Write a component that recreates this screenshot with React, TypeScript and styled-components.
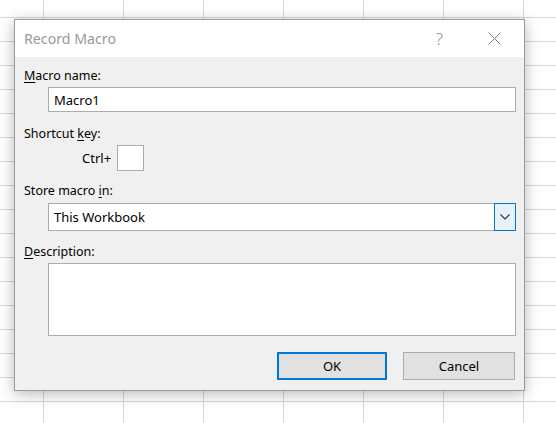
import React from 'react';
import styled, { createGlobalStyle } from 'styled-components';

const GlobalStyle = createGlobalStyle`
  html, body {
    margin: 0;
    padding: 0;
    width: 556px;
    height: 423px;
    overflow: hidden;
    background-color: #ffffff;
    background-image:
      linear-gradient(to right, #d6d6d6 1px, transparent 1px),
      linear-gradient(to bottom, #d6d6d6 1px, transparent 1px);
    background-size: 80px 24px;
    background-position: 43px 17px;
  }
`;

const Sheet = styled.div`
  padding: 19px 0 0 14px;
  font-family: 'Segoe UI', 'Noto Sans', 'Open Sans', sans-serif;
`;

const Dialog = styled.div`
  box-sizing: border-box;
  width: 511px;
  height: 372px;
  border: 1px solid #9a9a9a;
  background: #f0f0f0;
  box-shadow: 0 3px 14px rgba(0, 0, 0, 0.28);
  display: flex;
  flex-direction: column;
`;

const TitleBar = styled.div`
  height: 37px;
  background: #ffffff;
  display: flex;
  align-items: center;
  padding: 0 23px 0 9px;
`;

const Title = styled.span`
  flex: 1;
  font-size: 14.2px;
  color: #9a9a9a;
  padding-bottom: 1px;
`;

const Help = styled.span`
  font-size: 17px;
  color: #8a8a8a;
  margin-right: 45px;
  font-weight: 300;
`;

const Body = styled.div`
  flex: 1;
  padding: 11px 8px 10px 9px;
  display: flex;
  flex-direction: column;
  font-size: 12.5px;
  color: #000;
`;

const Label = styled.div<{ $gap?: number }>`
  line-height: 16px;
  height: 16px;
  margin-bottom: ${(p) => p.$gap ?? 3}px;
  u { text-decoration-thickness: 1px; text-underline-offset: 2px; }
`;

const Field = styled.div<{ $h: number; $after: number }>`
  box-sizing: border-box;
  margin-left: 24px;
  height: ${(p) => p.$h}px;
  margin-bottom: ${(p) => p.$after}px;
  background: #fff;
  border: 1px solid #acacac;
  display: flex;
  align-items: center;
  padding-left: 5px;
  font-size: 13px;
`;

const FieldText = styled.span`
  flex: 1;
`;

const DropButton = styled.div`
  box-sizing: border-box;
  width: 22px;
  height: 28px;
  margin: -1px -1px -1px 0;
  border: 1px solid #0078d7;
  background: #e5f1fb;
  display: flex;
  align-items: center;
  justify-content: center;
`;

const ShortcutRow = styled.div`
  display: flex;
  align-items: center;
  margin-left: 58px;
  margin-bottom: 12px;
  gap: 6px;
  font-size: 13px;
`;

const KeyBox = styled.div`
  box-sizing: border-box;
  width: 27px;
  height: 26px;
  background: #fff;
  border: 1px solid #acacac;
`;

const ButtonRow = styled.div`
  display: flex;
  justify-content: flex-end;
  gap: 16px;
  padding-right: 1px;
`;

const Button = styled.div<{ $primary?: boolean }>`
  box-sizing: border-box;
  width: ${(p) => (p.$primary ? 110 : 112)}px;
  height: 28px;
  background: #e1e1e1;
  border: ${(p) => (p.$primary ? '2px solid #0078d7' : '1px solid #adadad')};
  display: flex;
  align-items: center;
  justify-content: center;
  font-size: 13px;
`;

const CloseIcon = () => (
  <svg width="13" height="13" viewBox="0 0 13 13">
    <path d="M0.5 0.5 L12.5 12.5 M12.5 0.5 L0.5 12.5" stroke="#7a7a7a" strokeWidth="1" fill="none" />
  </svg>
);

const Chevron = () => (
  <svg width="10" height="6" viewBox="0 0 10 6">
    <path d="M0.5 0.5 L5 5 L9.5 0.5" stroke="#333" strokeWidth="1.1" fill="none" />
  </svg>
);

const App = () => (
  <>
    <GlobalStyle />
    <Sheet>
      <Dialog>
        <TitleBar>
          <Title>Record Macro</Title>
          <Help>?</Help>
          <CloseIcon />
        </TitleBar>
        <Body>
          <Label><u>M</u>acro name:</Label>
          <Field $h={25} $after={14}>
            <FieldText>Macro1</FieldText>
          </Field>
          <Label>Shortcut <u>k</u>ey:</Label>
          <ShortcutRow>
            <span>Ctrl+</span>
            <KeyBox />
          </ShortcutRow>
          <Label $gap={4}>Store macro <u>i</u>n:</Label>
          <Field $h={28} $after={13}>
            <FieldText>This Workbook</FieldText>
            <DropButton>
              <Chevron />
            </DropButton>
          </Field>
          <Label><u>D</u>escription:</Label>
          <Field $h={73} $after={16} />
          <ButtonRow>
            <Button $primary>OK</Button>
            <Button>Cancel</Button>
          </ButtonRow>
        </Body>
      </Dialog>
    </Sheet>
  </>
);

export default App;
